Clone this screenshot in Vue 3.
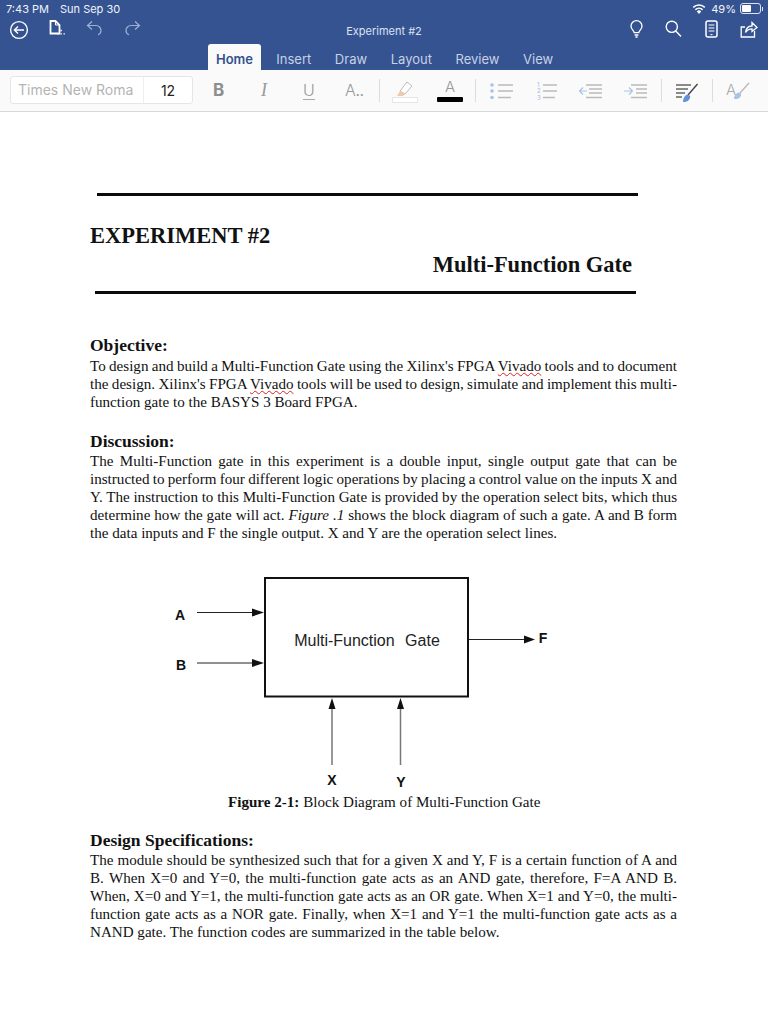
<script setup>
const tabs = ['Insert', 'Draw', 'Layout', 'Review', 'View']
const objective = [
  { parts: ["To design and build a Multi-Function Gate using the Xilinx's FPGA ", { w: 'Vivado' }, ' tools and to document'] },
  { parts: ["the design. Xilinx's FPGA ", { w: 'Vivado' }, ' tools will be used to design, simulate and implement this multi-'] },
  { parts: ['function gate to the BASYS 3 Board FPGA.'], last: true },
]
const discussion = [
  { parts: ['The Multi-Function gate in this experiment is a double input, single output gate that can be'] },
  { parts: ['instructed to perform four different logic operations by placing a control value on the inputs X and'] },
  { parts: ['Y. The instruction to this Multi-Function Gate is provided by the operation select bits, which thus'] },
  { parts: ['determine how the gate will act. ', { i: 'Figure .1' }, ' shows the block diagram of such a gate. A and B form'] },
  { parts: ['the data inputs and F the single output. X and Y are the operation select lines.'], last: true },
]
const design = [
  { parts: ['The module should be synthesized such that for a given X and Y, F is a certain function of A and'] },
  { parts: ['B. When X=0 and Y=0, the multi-function gate acts as an AND gate, therefore, F=A AND B.'] },
  { parts: ['When, X=0 and Y=1, the multi-function gate acts as an OR gate. When X=1 and Y=0, the multi-'] },
  { parts: ['function gate acts as a NOR gate. Finally, when X=1 and Y=1 the multi-function gate acts as a'] },
  { parts: ['NAND gate. The function codes are summarized in the table below.'], last: true },
]
const sections = [
  { title: 'Objective:', lines: objective, cls: 's1' },
  { title: 'Discussion:', lines: discussion, cls: 's2' },
]
</script>

<template>
  <div class="app">
    <header class="head">
      <div class="status">
        <span class="time">7:43 PM</span><span class="date">Sun Sep 30</span>
        <span class="spacer"></span>
        <svg class="wifi" width="14" height="10" viewBox="0 0 14 10"><path d="M7 10 L4.8 7.4 A3.2 3.2 0 0 1 9.2 7.4Z" fill="#fff"/><path d="M3.3 5.7 A5.4 5.4 0 0 1 10.7 5.7" fill="none" stroke="#fff" stroke-width="1.5"/><path d="M1.2 3.4 A8.4 8.4 0 0 1 12.8 3.4" fill="none" stroke="#fff" stroke-width="1.5"/></svg>
        <span class="pct">49%</span>
        <span class="batt"><span class="fill"></span></span><span class="nub"></span>
      </div>
      <div class="titlebar">
        <svg class="ic" style="left:9px" width="20" height="20" viewBox="0 0 20 20" fill="none" stroke="#fff"><circle cx="10" cy="10" r="8.4" stroke-width="1.4"/><path d="M15 10H5.5M9 6.4 5.4 10 9 13.6" stroke-width="1.4"/></svg>
        <svg class="ic" style="left:49px" width="17" height="16" viewBox="0 0 17 16" fill="none"><path d="M1.500 1H6.500L10.500 5V13.500H1.500Z" stroke="#fff" stroke-width="1.8"/><path d="M6.500 1V5H10.500" stroke="#fff"/><path d="M8.500 13.800h1.400M11.500 13.800h1.400M14.500 13.800h1.400M11.500 10.500h1.400" stroke="#fff" stroke-width="1.300"/></svg>
        <svg class="ic dim" style="left:86px" width="17" height="16" viewBox="0 0 17 16" fill="none" stroke="#9fb1d3" stroke-width="1.2"><path d="M6 1.5 1.5 5.5 6 9.5M1.5 5.5H10a5 5 0 0 1 5 5 4.5 4.5 0 0 1-3 4.2"/></svg>
        <svg class="ic dim" style="left:124px" width="17" height="16" viewBox="0 0 17 16" fill="none" stroke="#9fb1d3" stroke-width="1.2"><path d="M11 1.5 15.5 5.5 11 9.5M15.5 5.5H7a5 5 0 0 0-5 5 4.5 4.5 0 0 0 3 4.2"/></svg>
        <span class="doc-title">Experiment #2</span>
        <svg class="ic" style="left:630px" width="13" height="18" viewBox="0 0 13 18" fill="none" stroke="#fff" stroke-width="1.3"><path d="M4.2 12.6C3.8 10.4 1 9.4 1 6.2a5.5 5.5 0 0 1 11 0c0 3.2-2.8 4.2-3.2 6.4Z"/><path d="M4.6 15h3.8M5.4 17h2.2"/></svg>
        <svg class="ic" style="left:665px" width="17" height="18" viewBox="0 0 17 18" fill="none" stroke="#fff" stroke-width="1.4"><circle cx="6.8" cy="6.8" r="5.6"/><path d="M10.8 11 16 16.5"/></svg>
        <svg class="ic" style="left:705px" width="13" height="18" viewBox="0 0 13 18" fill="none" stroke="#fff" stroke-width="1.5"><rect x="1" y="1" width="11" height="16" rx="2"/><path d="M3.6 5h5.8M3.6 8h5.8M3.6 11h5.8" stroke-width="1.2"/><path d="M5.5 14.6h2" stroke-width="1"/></svg>
        <svg class="ic" style="left:740px" width="18" height="18" viewBox="0 0 18 18" fill="none" stroke="#fff" stroke-width="1.3"><path d="M5 7H1.2V17H14.5V11"/><path d="M5.5 12.5C6 8.5 8.5 6 12 6V2.5L17 7.5 12 11.5V8.8C9.5 8.8 7 10 5.5 12.5Z"/></svg>
      </div>
      <nav class="tabs">
        <span class="tab active">Home</span>
        <span v-for="t in tabs" :key="t" class="tab">{{ t }}</span>
      </nav>
    </header>

    <div class="toolbar">
      <div class="fontbox">
        <span class="fname">Times New Roma</span>
        <span class="fsize">12</span>
      </div>
      <span class="fmt b" style="left:213px">B</span>
      <span class="fmt i" style="left:261px">I</span>
      <span class="fmt u" style="left:303px">U</span>
      <span class="fmt a" style="left:345px">A<small>..</small></span>
      <span class="sep" style="left:379px"></span>
      <svg class="tool" style="left:392px;top:8px" width="26" height="26" viewBox="0 0 26 26"><path d="M8 13 15 4l5 4-7 8Z" fill="#fff" stroke="#bbb"/><path d="M8 13l5 3-2 2-6 0Z" fill="#f1c9a7"/><rect x="0.500" y="19.500" width="25" height="5" fill="#fff" stroke="#e6e6e6"/></svg>
      <span class="fmt color" style="left:445px">A</span>
      <span class="swatch"></span>
      <span class="sep" style="left:475px"></span>
      <svg class="tool" style="left:490px;top:11px" width="24" height="20" viewBox="0 0 24 20"><g fill="#a9c3e6"><circle cx="2" cy="4" r="1.8"/><circle cx="2" cy="10" r="1.8"/><circle cx="2" cy="16.500" r="1.8"/></g><path d="M8 4h15M8 10h15M8 16.500h13" stroke="#bbb" stroke-width="1.3"/></svg>
      <svg class="tool" style="left:536px;top:11px" width="24" height="20" viewBox="0 0 24 20"><g fill="#9dbbe4" class="nums"><text x="1" y="6">1</text><text x="1" y="12">2</text><text x="1" y="19">3</text></g><path d="M7 4h14M7 10h14M7 16.500h12" stroke="#bbb" stroke-width="1.3"/></svg>
      <svg class="tool" style="left:578px;top:11px" width="26" height="20" viewBox="0 0 26 20" fill="none"><path d="M8 4h16M11 8h13M11 12h13M8 16.500h16" stroke="#bbb" stroke-width="1.3"/><path d="M9 10H2M5 6.500 1.500 10 5 13.500" stroke="#a9c3e6" stroke-width="1.2"/></svg>
      <svg class="tool" style="left:623px;top:11px" width="26" height="20" viewBox="0 0 26 20" fill="none"><path d="M8 4h16M13 8h11M13 12h11M8 16.500h16" stroke="#bbb" stroke-width="1.3"/><path d="M1 10h8M6 6.500 9.500 10 6 13.500" stroke="#a9c3e6" stroke-width="1.2"/></svg>
      <span class="sep" style="left:661px"></span>
      <svg class="tool" style="left:675px;top:13px" width="24" height="20" viewBox="0 0 24 20" fill="none"><path d="M1 2h15M1 6h12M1 10h9M1 14h6" stroke="#666" stroke-width="1.4"/><path d="M22.500 1 13 12" stroke="#444" stroke-width="1.4"/><path d="M8 19c0-4 2-7 5-7.500 2 .5 2.500 2 2 3.500-1 3-4 4.500-7 4Z" fill="#5f92d6"/></svg>
      <span class="sep" style="left:712px"></span>
      <span class="fmt style" style="left:726px">A</span>
      <svg class="tool" style="left:732px;top:12px" width="18" height="20" viewBox="0 0 18 20" fill="none"><path d="M17 1 8 11" stroke="#bbb" stroke-width="1.4"/><path d="M2 17c0-3 2-6 5-6.500 2 .5 2.500 2 2 3-1 3-4 4-7 3.500Z" fill="#a9c3e6"/></svg>
    </div>

    <main class="page">
      <div class="rule r1"></div>
      <h1 class="exp">EXPERIMENT #2</h1>
      <h2 class="name">Multi-Function Gate</h2>
      <div class="rule r2"></div>

      <section v-for="s in sections" :key="s.title" :class="['sec', s.cls]">
        <h3>{{ s.title }}</h3>
        <p v-for="(l, n) in s.lines" :key="n" :class="['line', { last: l.last }]">
          <template v-for="(p, k) in l.parts" :key="k">
            <span v-if="p.w" class="spell">{{ p.w }}</span>
            <em v-else-if="p.i">{{ p.i }}</em>
            <template v-else>{{ p }}</template>
          </template>
        </p>
      </section>

      <svg class="diagram" width="768" height="216" viewBox="0 0 768 216">
        <g transform="translate(0,-577)">
          <rect x="265" y="578" width="203" height="118.500" fill="#fff" stroke="#111" stroke-width="2"/>
          <path d="M197 612.500H254M197 663H254M469 639.500H526" stroke="#222" stroke-width="1.2" fill="none"/>
          <path d="M264 612.500 252 608.500V616.500ZM264 663 252 659V667ZM535 639.500 524 635.500V643.500Z" fill="#111"/>
          <path d="M332 765V706M400.500 765V706" stroke="#777" stroke-width="1.5" fill="none"/>
          <path d="M332 698l-3.500 11h7ZM400.500 698l-3.500 11h7Z" fill="#111"/>
          <text x="367" y="646" class="dtext" text-anchor="middle">Multi-Function Gate</text>
          <text x="180" y="620" class="dlabel" text-anchor="middle">A</text>
          <text x="181" y="670" class="dlabel" text-anchor="middle">B</text>
          <text x="543" y="643" class="dlabel" text-anchor="middle">F</text>
          <text x="332" y="785" class="dlabel" text-anchor="middle">X</text>
          <text x="401" y="787" class="dlabel" text-anchor="middle">Y</text>
        </g>
      </svg>
      <p class="caption"><b>Figure 2-1:</b> Block Diagram of Multi-Function Gate</p>

      <section class="sec s3">
        <h3>Design Specifications:</h3>
        <p v-for="(l, n) in design" :key="n" :class="['line', { last: l.last }]">{{ l.parts[0] }}</p>
      </section>
    </main>
  </div>
</template>

<style>
html, body { margin: 0; background: #fff; }
</style>

<style scoped>
.app { width: 768px; height: 1024px; overflow: hidden; background: #fff; position: relative; font-family: Inter, "Liberation Sans", sans-serif; }
.head { background: #355391; height: 70px; color: #fff; }
.status { height: 17px; display: flex; align-items: center; font-size: 11px; padding: 0 5px 0 6px; color: #f1f4fa; }
.time { margin-right: 11px; }
.spacer { flex: 1; }
.wifi { margin-right: 5px; }
.pct { margin-right: 4px; }
.batt { width: 21px; height: 11px; border: 1px solid #dfe5f0; border-radius: 3px; padding: 1px; box-sizing: border-box; display: inline-block; }
.fill { display: block; width: 9px; height: 100%; background: #fff; border-radius: 1px; }
.nub { width: 1px; height: 4px; background: #dfe5f0; margin-left: 1px; }
.titlebar { position: relative; height: 27px; }
.ic { position: absolute; top: 3px; }
.doc-title { position: absolute; left: 0; right: 0; top: 7px; text-align: center; font-size: 11px; color: #dbe2f0; }
.tabs { display: flex; height: 26px; padding-left: 208px; align-items: stretch; }
.tab { font-size: 13px; color: #c6d1e6; padding: 0 11.800px; line-height: 30px; }
.tab.active { background: #fafafa; color: #33518f; font-weight: 600; border-radius: 3px 3px 0 0; padding: 0; width: 53px; margin-right: 3.500px; text-align: center; }
.toolbar { position: relative; height: 41px; background: #fafafa; border-bottom: 1px solid #d8d8d8; }
.fontbox { position: absolute; left: 10px; top: 6px; width: 183px; height: 28px; background: #fff; border: 1px solid #e6e6e6; border-radius: 3px; display: flex; align-items: center; box-sizing: border-box; }
.fname { width: 133px; padding-left: 7px; font-size: 14px; color: #b4b4b4; white-space: nowrap; overflow: hidden; box-sizing: border-box; border-right: 1px solid #eee; line-height: 26px; }
.fsize { flex: 1; text-align: center; font-size: 14px; color: #222; }
.fmt { position: absolute; top: 10px; line-height: 20px; font-size: 17px; color: #999; }
.fmt.b { font-weight: 700; font-size: 17px; color: #8e8e8e; }
.fmt.i { font-family: "Liberation Serif", serif; font-style: italic; font-size: 18px; }
.fmt.u { font-size: 16px; font-weight: 300; border-bottom: 1px solid #aaa; line-height: 18px; top: 11px; }
.fmt.a { font-weight: 300; font-size: 16px; }
.fmt.a small { font-size: 12px; font-weight: 700; }
.fmt.color { font-size: 15px; font-weight: 300; top: 7px; }
.swatch { position: absolute; left: 437px; top: 27px; width: 26px; height: 5px; background: #000; border-radius: 1px; }
.fmt.style { color: #aaa; font-size: 15px; font-weight: 300; }
.nums { font-size: 6px; font-family: Inter, sans-serif; }
.sep { position: absolute; top: 9px; width: 1px; height: 23px; background: #ddd; }
.tool { position: absolute; }
.page { font-family: "Liberation Serif", "Times New Roman", serif; color: #111; position: relative; }
.rule { height: 3px; background: #0b0b0b; width: 541px; }
.r1 { margin: 81px 0 0 97px; }
.r2 { margin: 0 0 0 95px; }
.exp { margin: 26px 0 0 90px; font-size: 22.500px; line-height: 28px; font-weight: 700; }
.name { margin: 1px 136px 12px 0; text-align: right; font-size: 22.500px; line-height: 28px; font-weight: 700; }
.sec { margin-left: 90px; width: 587px; }
.sec h3 { margin: 0; font-size: 17.500px; font-weight: 700; }
.s1 { margin-top: 40px; }
.s1 h3 { line-height: 23px; }
.s2 { margin-top: 19px; }
.s2 h3 { line-height: 22px; }
.s3 { margin-top: 19px; }
.s3 h3 { line-height: 21px; }
.line { margin: 0; font-size: 15.100px; line-height: 18px; text-align: justify; text-align-last: justify; white-space: nowrap; word-spacing: -0.600px; }
.line.last { text-align-last: left; word-spacing: 0; }
.spell { text-decoration: underline wavy #d22; text-decoration-thickness: 1px; text-underline-offset: 1px; }
.diagram { display: block; margin-top: 35px; }
.dtext { font-family: "Liberation Sans", Arial, sans-serif; font-size: 16px; word-spacing: 6px; fill: #222; }
.dlabel { font-family: "Liberation Sans", Arial, sans-serif; font-size: 14px; font-weight: 700; fill: #111; }
.caption { margin: 0 0 0 228px; font-size: 15.100px; line-height: 18px; white-space: nowrap; }
</style>
